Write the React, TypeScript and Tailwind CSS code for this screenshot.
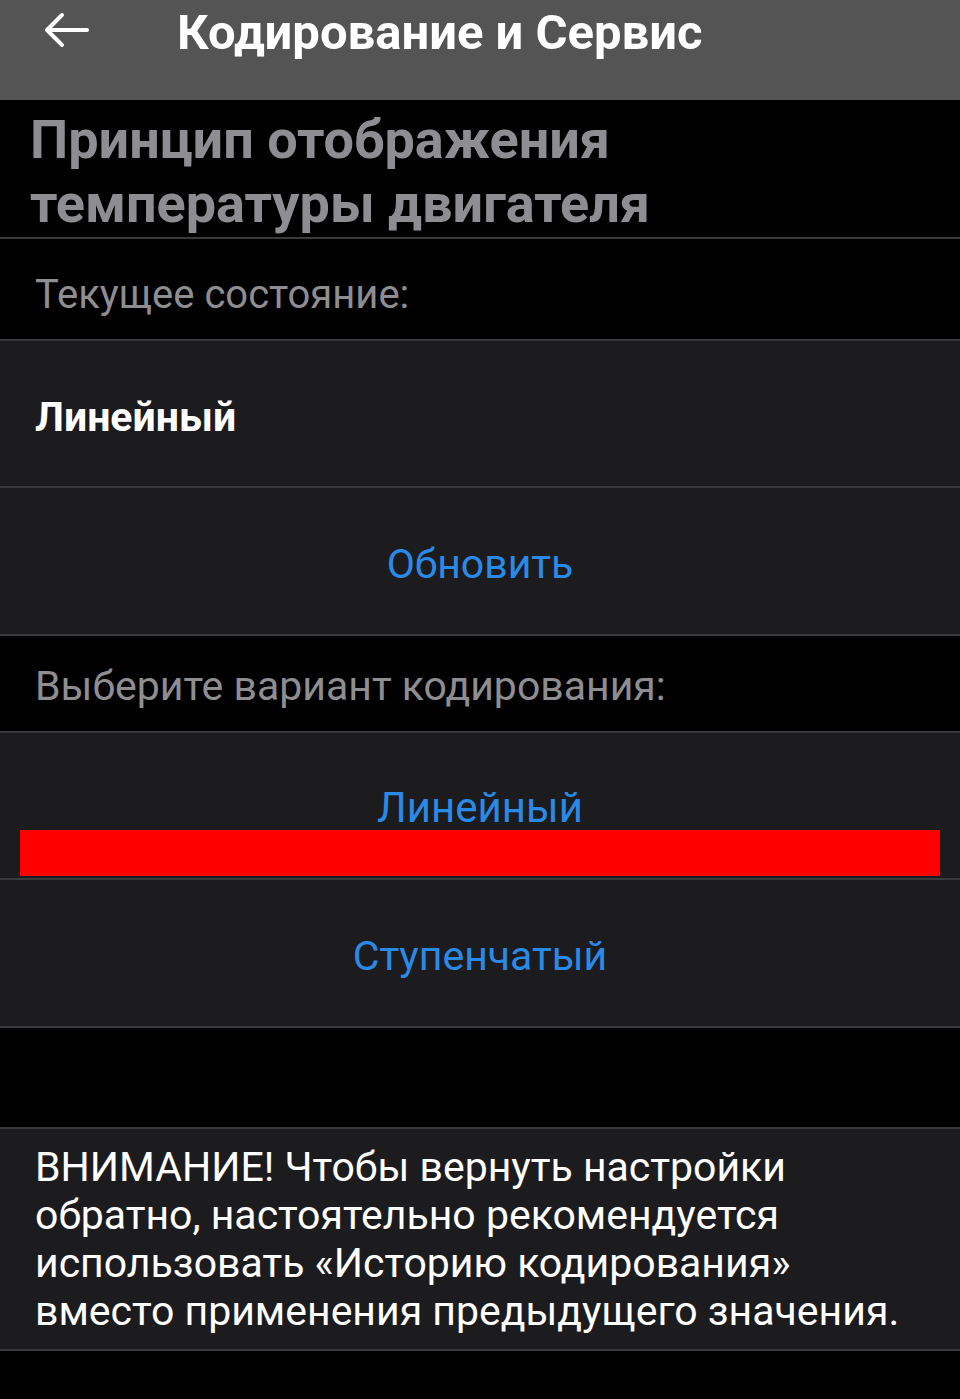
import React from 'react';

const font = { fontFamily: 'Roboto, "Noto Sans", sans-serif' };

function Row({ children, className = '', h = 'h-[148px]' }: { children: React.ReactNode; className?: string; h?: string }) {
    return (
        <div className={`${h} bg-[#1c1c1e] border-b-2 border-[#3a3a3c] flex items-center ${className}`}>
            {children}
        </div>
    );
}

export default function App() {
    return (
        <div className="w-[960px] min-h-[1399px] bg-black" style={font}>
            <header className="h-[100px] bg-[#545454] flex items-start">
                <div className="w-[177px] flex pl-[44px] pt-[12px]">
                    <svg width="46" height="36" viewBox="0 0 46 36" fill="none" stroke="white" strokeWidth="4" strokeLinecap="round" strokeLinejoin="round">
                        <path d="M43 18H4" />
                        <path d="M18 3L3 18l15 15" />
                    </svg>
                </div>
                <h1 className="text-white text-[49px] font-bold leading-[64px] pt-[1px]">Кодирование и Сервис</h1>
            </header>

            <div className="h-[139px] border-b-2 border-[#3a3a3c] px-[30px] pt-[8px]">
                <h2 className="text-[#8e8e92] text-[54px] font-bold leading-[64px]">
                    Принцип отображения температуры двигателя
                </h2>
            </div>

            <div className="h-[102px] border-b-2 border-[#3a3a3c] flex items-center px-[35px] pt-[12px]">
                <span className="text-[#8e8e92] text-[40px]">Текущее состояние:</span>
            </div>

            <Row className="px-[35px] pt-[8px]" h="h-[147px]">
                <span className="text-white text-[41px] font-bold">Линейный</span>
            </Row>

            <Row className="justify-center pt-[8px]">
                <span className="text-[#2a8ae8] text-[41px]">Обновить</span>
            </Row>

            <div className="h-[97px] border-b-2 border-[#3a3a3c] flex items-center px-[35px] pt-[7px]">
                <span className="text-[#8e8e92] text-[41px]">Выберите вариант кодирования:</span>
            </div>

            <div className="relative">
                <Row className="justify-center pt-[3px]" h="h-[147px]">
                    <span className="text-[#2a8ae8] text-[42px]">Линейный</span>
                </Row>
                <div className="absolute left-[20px] right-[20px] top-[97px] h-[46px] bg-[#ff0000]" />
            </div>

            <Row className="justify-center pt-[8px]">
                <span className="text-[#2a8ae8] text-[41px]">Ступенчатый</span>
            </Row>

            <div className="h-[101px] border-b-2 border-[#3a3a3c]" />

            <div className="h-[222px] bg-[#1c1c1e] border-b-2 border-[#3a3a3c] px-[35px] pt-[14px]">
                <p className="w-[880px] text-white text-[41px] leading-[48px]">
                    ВНИМАНИЕ! Чтобы вернуть настройки обратно, настоятельно рекомендуется использовать «Историю кодирования» вместо применения предыдущего значения.
                </p>
            </div>
        </div>
    );
}
